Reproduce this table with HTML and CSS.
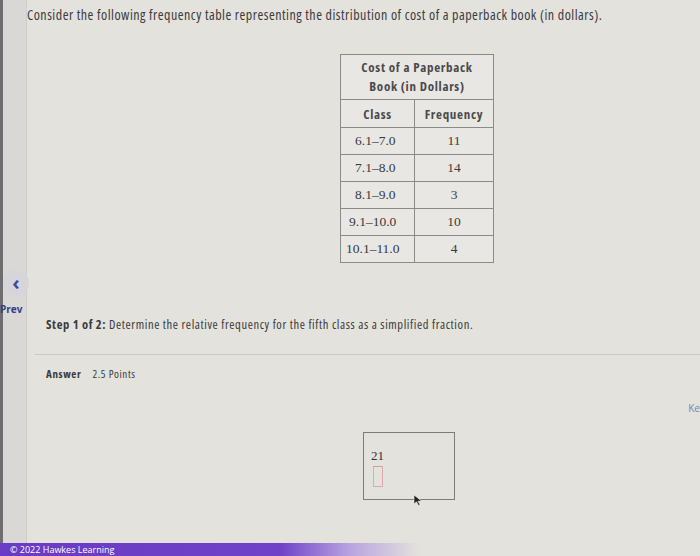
FILE: index.html
```html
<!DOCTYPE html>
<html>
<head>
<meta charset="utf-8">
<link rel="stylesheet" href="styles.css">
</head>
<body>
<div class="page">
  <div class="row">
    <div class="edge"></div>
    <aside class="sidebar">
      <div class="prev-circle">&lsaquo;</div>
      <div class="prev-label">Prev</div>
    </aside>
    <main class="main">
      <p class="question">Consider the following frequency table representing the distribution of cost of a paperback book (in dollars).</p>
      <table class="freq">
        <thead>
          <tr><th colspan="2" class="title">Cost of a Paperback<br>Book (in Dollars)</th></tr>
          <tr><th class="colhead">Class</th><th class="colhead">Frequency</th></tr>
        </thead>
        <tbody>
          <tr><td class="cls">6.1–7.0</td><td class="num">11</td></tr>
          <tr><td class="cls">7.1–8.0</td><td class="num">14</td></tr>
          <tr><td class="cls">8.1–9.0</td><td class="num">3</td></tr>
          <tr><td class="cls">9.1–10.0</td><td class="num">10</td></tr>
          <tr><td class="cls">10.1–11.0</td><td class="num">4</td></tr>
        </tbody>
      </table>
      <p class="step"><b>Step 1 of 2:</b> Determine the relative frequency for the fifth class as a simplified fraction.</p>
      <hr class="sep">
      <p class="answer"><b>Answer</b><span class="points">2.5 Points</span></p>
      <div class="answer-row">
        <div class="answer-box">
          <div class="fraction">
            <span class="numer">21</span>
            <span class="denom"></span>
          </div>
          <svg class="cursor" width="10" height="12" viewBox="0 0 10 12"><path d="M1 1 L1 10 L3.5 7.8 L5.5 11.5 L7 10.8 L5 7.2 L8.5 7 Z" fill="#222" stroke="#eee" stroke-width="0.6"/></svg>
        </div>
      </div>
      <span class="keypad">Ke</span>
    </main>
  </div>
  <footer class="footer"><span class="copy">© 2022 Hawkes Learning</span></footer>
</div>
</body>
</html>
```
FILE: styles.css
```css
html, body {
  margin: 0;
  padding: 0;
}
body {
  width: 700px;
  height: 556px;
  overflow: hidden;
  background: #e4e2dc;
  font-family: "Open Sans", "DejaVu Sans", sans-serif;
  color: #3a3a3c;
}
.page {
  display: flex;
  flex-direction: column;
  height: 556px;
}
.row {
  flex: 1;
  display: flex;
  min-height: 0;
}
.edge {
  width: 3px;
  background: #6e6e70;
}
.sidebar {
  width: 24px;
  background: #d9d8d6;
  border-right: 1px solid #cfcdca;
  display: flex;
  flex-direction: column;
  align-items: flex-start;
  padding-top: 270px;
  box-sizing: border-box;
  position: relative;
}
.prev-circle {
  width: 26px;
  height: 26px;
  border-radius: 50%;
  background: #d6d6da;
  display: flex;
  align-items: center;
  justify-content: center;
  color: #3b4aa0;
  font-size: 20px;
  font-weight: 700;
  line-height: 1;
}
.prev-label {
  margin-top: 6px;
  margin-left: -3px;
  font-size: 10px;
  font-weight: 700;
  color: #34407e;
}
.main {
  flex: 1;
  position: relative;
  padding: 5px 0 0 0;
  box-sizing: border-box;
}
.question {
  margin: 0;
  font-size: 14px;
  font-stretch: 75%;
  letter-spacing: 0.5px;
  line-height: 19px;
  white-space: nowrap;
  color: #3b3b3d;
}
.freq {
  margin: 30px 0 0 313px;
  border-collapse: collapse;
  width: 154px;
  border: 1px solid #6a6a6a;
  background: #e8e7e3;
}
.freq th, .freq td {
  border: 1px solid #8a8a8a;
  padding: 0;
}
.title {
  height: 44px;
  font-size: 13px;
  font-weight: 700;
  font-stretch: 75%;
  letter-spacing: 0.7px;
  line-height: 19px;
  color: #4a4a4c;
  text-align: center;
  border-bottom: 1.5px solid #6a6a6a;
}
.colhead {
  height: 27px;
  font-size: 13px;
  font-weight: 700;
  font-stretch: 75%;
  letter-spacing: 0.7px;
  color: #4a4a4c;
}
.colhead:first-child {
  width: 73px;
}
.freq td {
  height: 26px;
  font-family: "Liberation Serif", "Times New Roman", serif;
  font-size: 13.5px;
  color: #3a3a3a;
}
.cls {
  text-align: left;
  padding-left: 14px !important;
}
.freq tbody tr:nth-child(n+4) .cls {
  padding-left: 8px !important;
}
.freq tbody tr:last-child .cls {
  padding-left: 5px !important;
}
.num {
  text-align: center;
}
.step {
  margin: 54px 0 0 19px;
  font-size: 12.5px;
  font-stretch: 75%;
  letter-spacing: 0.6px;
  line-height: 16px;
  white-space: nowrap;
  color: #3a3a3c;
}
.step b {
  font-weight: 700;
}
.sep {
  margin: 21px 0 0 8px;
  border: 0;
  border-top: 1px solid #cac8c2;
  height: 0;
}
.answer {
  margin: 11px 0 0 19px;
  font-size: 11px;
  font-stretch: 75%;
  letter-spacing: 0.6px;
  color: #3a3a3c;
}
.points {
  margin-left: 11px;
  font-weight: 400;
}
.answer-row {
  margin: 51px 0 0 336px;
}
.answer-box {
  width: 92px;
  height: 68px;
  border: 1px solid #7c7c7c;
  position: relative;
  box-sizing: border-box;
}
.fraction {
  display: flex;
  flex-direction: column;
  align-items: flex-start;
  padding: 16px 0 0 7px;
}
.numer {
  font-family: "Liberation Serif", "Times New Roman", serif;
  font-size: 13px;
  color: #333;
  line-height: 14px;
}
.denom {
  margin-top: 3px;
  margin-left: 2px;
  width: 10px;
  height: 21px;
  border: 1px solid #e0a8a8;
  border-top: 1.5px solid #d89a9a;
  box-sizing: border-box;
}
.cursor {
  position: absolute;
  left: 49px;
  top: 61px;
}
.keypad {
  position: absolute;
  right: 0;
  top: 401px;
  font-size: 10px;
  color: #6f86b8;
}
.footer {
  height: 13px;
  background: linear-gradient(to right, #6a3bc4 0%, #6f42c8 40%, #b9a4e0 50%, #e4e2dc 60%);
  position: relative;
}
.copy {
  position: absolute;
  left: 10px;
  top: 2px;
  font-size: 9px;
  line-height: 10px;
  color: #ffffff;
  white-space: nowrap;
}
```
